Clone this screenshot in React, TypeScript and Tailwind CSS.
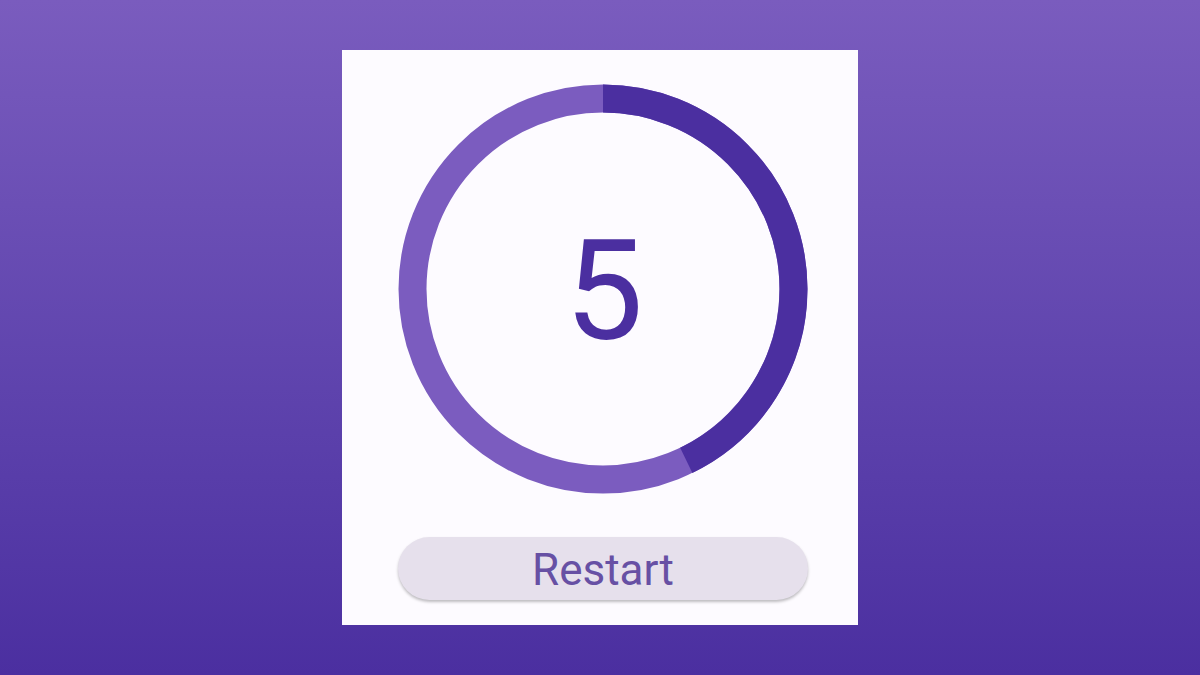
import React from "react";

export default function App() {
  const r = 190.5;
  const c = 2 * Math.PI * r;
  const frac = 154 / 360;
  return (
    <div
      className="w-[1200px] h-[675px] flex items-center justify-center bg-gradient-to-b from-[#7a5cbe] to-[#4b2fa0]"
      style={{ fontFamily: "Roboto, 'Noto Sans', sans-serif" }}
    >
      <div className="w-[516px] h-[575px] bg-[#fdfbff] flex flex-col items-center pt-[34px] pl-[6px]">
        <div className="relative w-[410px] h-[410px]">
          <svg width="410" height="410" viewBox="0 0 410 410" className="absolute inset-0">
            <circle cx="205" cy="205" r={r} fill="none" stroke="#7b5cbf" strokeWidth="28" />
            <circle
              cx="205"
              cy="205"
              r={r}
              fill="none"
              stroke="#4b2fa0"
              strokeWidth="28"
              strokeDasharray={`${c * frac} ${c}`}
              transform="rotate(-90 205 205)"
            />
          </svg>
          <div className="absolute inset-0 flex items-center justify-center text-[140px] leading-none text-[#4b2fa0] pt-[4px] pl-[2px]">
            5
          </div>
        </div>
        <button className="mt-[43px] w-[410px] h-[63px] rounded-full bg-[#e6e0ec] text-[#6750a4] text-[44px] leading-none shadow-[0_2px_3px_rgba(0,0,0,0.25)] flex items-center justify-center pt-[2px]">
          Restart
        </button>
      </div>
    </div>
  );
}
